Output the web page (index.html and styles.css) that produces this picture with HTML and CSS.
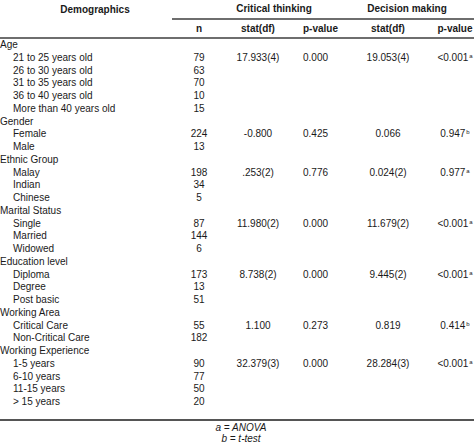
FILE: index.html
```html
<!DOCTYPE html>
<html>
<head>
<meta charset="utf-8">
<link rel="stylesheet" href="styles.css">
</head>
<body>
<table class="tbl">
  <colgroup>
    <col class="c-label"><col class="c-n"><col class="c-cs"><col class="c-cp"><col class="c-ds"><col class="c-dp">
  </colgroup>
  <thead>
    <tr class="h1">
      <th class="demo">Demographics</th>
      <th class="rule"></th>
      <th class="rule grp-ct" colspan="2">Critical thinking</th>
      <th class="rule grp-dm" colspan="2">Decision making</th>
    </tr>
    <tr class="h2">
      <th></th>
      <th class="ctr">n</th>
      <th class="ctr">stat(df)</th>
      <th class="lp">p-value</th>
      <th class="ctr">stat(df)</th>
      <th class="dp">p-value</th>
    </tr>
  </thead>
  <tbody>
    <tr><td class="cat">Age</td><td></td><td></td><td></td><td></td><td></td></tr>
    <tr><td class="sub">21 to 25 years old</td><td class="ctr">79</td><td class="ctr">17.933(4)</td><td class="lp">0.000</td><td class="ctr">19.053(4)</td><td class="dp">&lt;0.001<sup>a</sup></td></tr>
    <tr><td class="sub">26 to 30 years old</td><td class="ctr">63</td><td></td><td></td><td></td><td></td></tr>
    <tr><td class="sub">31 to 35 years old</td><td class="ctr">70</td><td></td><td></td><td></td><td></td></tr>
    <tr><td class="sub">36 to 40 years old</td><td class="ctr">10</td><td></td><td></td><td></td><td></td></tr>
    <tr><td class="sub">More than 40 years old</td><td class="ctr">15</td><td></td><td></td><td></td><td></td></tr>
    <tr><td class="cat">Gender</td><td></td><td></td><td></td><td></td><td></td></tr>
    <tr><td class="sub">Female</td><td class="ctr">224</td><td class="ctr">-0.800</td><td class="lp">0.425</td><td class="ctr">0.066</td><td class="dp">0.947<sup>b</sup></td></tr>
    <tr><td class="sub">Male</td><td class="ctr">13</td><td></td><td></td><td></td><td></td></tr>
    <tr><td class="cat">Ethnic Group</td><td></td><td></td><td></td><td></td><td></td></tr>
    <tr><td class="sub">Malay</td><td class="ctr">198</td><td class="ctr">.253(2)</td><td class="lp">0.776</td><td class="ctr">0.024(2)</td><td class="dp">0.977<sup>a</sup></td></tr>
    <tr><td class="sub">Indian</td><td class="ctr">34</td><td></td><td></td><td></td><td></td></tr>
    <tr><td class="sub">Chinese</td><td class="ctr">5</td><td></td><td></td><td></td><td></td></tr>
    <tr><td class="cat">Marital Status</td><td></td><td></td><td></td><td></td><td></td></tr>
    <tr><td class="sub">Single</td><td class="ctr">87</td><td class="ctr">11.980(2)</td><td class="lp">0.000</td><td class="ctr">11.679(2)</td><td class="dp">&lt;0.001<sup>a</sup></td></tr>
    <tr><td class="sub">Married</td><td class="ctr">144</td><td></td><td></td><td></td><td></td></tr>
    <tr><td class="sub">Widowed</td><td class="ctr">6</td><td></td><td></td><td></td><td></td></tr>
    <tr><td class="cat">Education level</td><td></td><td></td><td></td><td></td><td></td></tr>
    <tr><td class="sub">Diploma</td><td class="ctr">173</td><td class="ctr">8.738(2)</td><td class="lp">0.000</td><td class="ctr">9.445(2)</td><td class="dp">&lt;0.001<sup>a</sup></td></tr>
    <tr><td class="sub">Degree</td><td class="ctr">13</td><td></td><td></td><td></td><td></td></tr>
    <tr><td class="sub">Post basic</td><td class="ctr">51</td><td></td><td></td><td></td><td></td></tr>
    <tr><td class="cat">Working Area</td><td></td><td></td><td></td><td></td><td></td></tr>
    <tr><td class="sub">Critical Care</td><td class="ctr">55</td><td class="ctr">1.100</td><td class="lp">0.273</td><td class="ctr">0.819</td><td class="dp">0.414<sup>b</sup></td></tr>
    <tr><td class="sub">Non-Critical Care</td><td class="ctr">182</td><td></td><td></td><td></td><td></td></tr>
    <tr><td class="cat">Working Experience</td><td></td><td></td><td></td><td></td><td></td></tr>
    <tr><td class="sub">1-5 years</td><td class="ctr">90</td><td class="ctr">32.379(3)</td><td class="lp">0.000</td><td class="ctr">28.284(3)</td><td class="dp">&lt;0.001<sup>a</sup></td></tr>
    <tr><td class="sub">6-10 years</td><td class="ctr">77</td><td></td><td></td><td></td><td></td></tr>
    <tr><td class="sub">11-15 years</td><td class="ctr">50</td><td></td><td></td><td></td><td></td></tr>
    <tr class="last"><td class="sub">&gt; 15 years</td><td class="ctr">20</td><td></td><td></td><td></td><td></td></tr>
  </tbody>
</table>
<div class="notes">
  <div>a = ANOVA</div>
  <div>b = t-test</div>
</div>
</body>
</html>
```
FILE: styles.css
```css
html, body {
  margin: 0;
  padding: 0;
  background: #fff;
}
body {
  width: 474px;
  font-family: "Liberation Sans", Arial, sans-serif;
  font-size: 10px;
  color: #1a1a1a;
}
.tbl {
  width: 474px;
  border-collapse: collapse;
  table-layout: fixed;
}
.c-label { width: 172px; }
.c-n { width: 54px; }
.c-cs { width: 64px; }
.c-cp { width: 55px; }
.c-ds { width: 86px; }
.c-dp { width: 43px; }

th, td {
  padding: 0;
  white-space: nowrap;
  font-weight: normal;
  text-align: left;
  vertical-align: middle;
}
th { font-weight: bold; }

.h1 th {
  height: 18px;
  line-height: 18px;
}
.h1 .rule {
  border-bottom: 2px solid #6e6e6e;
}
.demo {
  text-align: center;
  padding-left: 18px;
  line-height: 20px;
  vertical-align: bottom;
}
.grp-ct {
  text-align: center;
  padding-right: 23px;
  vertical-align: top;
  line-height: 16px;
}
.grp-dm {
  text-align: center;
  padding-right: 5px;
  vertical-align: top;
  line-height: 16px;
}
.h2 th {
  height: 17px;
  line-height: 17px;
  border-bottom: 2px solid #6e6e6e;
}

tbody td {
  height: 12.75px;
  line-height: 12.75px;
}
.last td {
  padding-bottom: 10px;
  border-bottom: 2px solid #555;
}

.ctr { text-align: center; }
.lp { padding-left: 13px; }
.dp { text-align: center; padding-left: 5px; }
.sub { padding-left: 13px; }
.cat { padding-left: 0; }

sup {
  font-size: 6px;
  line-height: 0;
  vertical-align: 3px;
  margin-left: 1px;
}

.notes {
  padding-left: 8px;
  padding-top: 1px;
  text-align: center;
  font-style: italic;
  line-height: 11.5px;
}
```
